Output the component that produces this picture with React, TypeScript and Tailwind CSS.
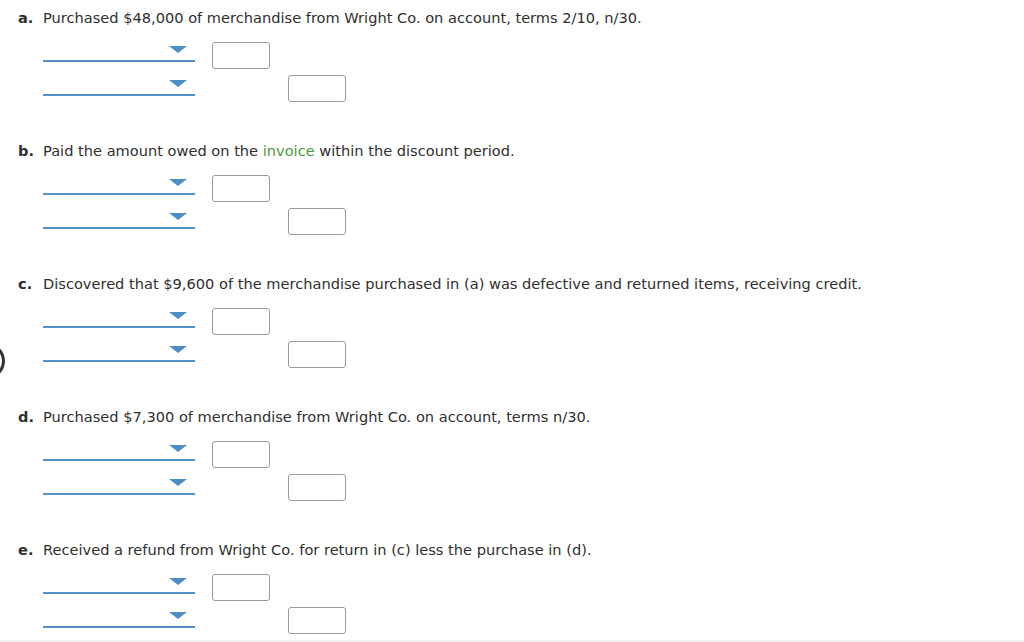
import React from 'react';

interface Entry {
  letter: string;
  text: React.ReactNode;
}

const entries: Entry[] = [
  { letter: 'a.', text: 'Purchased $48,000 of merchandise from Wright Co. on account, terms 2/10, n/30.' },
  {
    letter: 'b.',
    text: (
      <>
        Paid the amount owed on the <span className="text-[#4e9a3e]">invoice</span> within the discount period.
      </>
    ),
  },
  {
    letter: 'c.',
    text: 'Discovered that $9,600 of the merchandise purchased in (a) was defective and returned items, receiving credit.',
  },
  { letter: 'd.', text: 'Purchased $7,300 of merchandise from Wright Co. on account, terms n/30.' },
  { letter: 'e.', text: 'Received a refund from Wright Co. for return in (c) less the purchase in (d).' },
];

// account picker drawn as an underline with a caret on the right
function AccountSelect({ className = '' }: { className?: string }) {
  return (
    <div className={`w-[152px] h-5 border-b-2 border-[#5592c6] flex justify-end pr-[8px] pt-[4px] ${className}`}>
      <svg width="18" height="7" viewBox="0 0 18 7">
        <polygon points="0,0 18,0 9,7" fill="#4f8ec4" />
      </svg>
    </div>
  );
}

function AmountBox({ className = '' }: { className?: string }) {
  return (
    <input
      type="text"
      className={`w-[58px] h-[27px] rounded-[3px] border border-[#9a9a9a] bg-white outline-none ${className}`}
    />
  );
}

function JournalEntry({ entry }: { entry: Entry }) {
  return (
    <div className="h-[133px] pt-px">
      <div className="flex h-5 leading-5 text-[14.6px] text-[#2f2f2f]">
        <span className="w-[25px] font-bold">{entry.letter}</span>
        <span>{entry.text}</span>
      </div>
      {/* debit line */}
      <div className="flex items-start mt-[14px] pl-[25px]">
        <AccountSelect />
        <AmountBox className="ml-[17px]" />
      </div>
      {/* credit line */}
      <div className="flex items-start mt-[6px] pl-[25px]">
        <AccountSelect className="mt-px" />
        <AmountBox className="ml-[93px]" />
      </div>
    </div>
  );
}

export default function App() {
  return (
    <div className="relative w-[1024px] h-[642px] overflow-hidden bg-white font-['DejaVu_Sans',Verdana,sans-serif]">
      <div className="pl-[18px] pt-[7px]">
        {entries.map((e) => (
          <JournalEntry key={e.letter} entry={e} />
        ))}
      </div>
      <div className="h-[20px] bg-[#f1f1f1] mt-[-32px]" />
      {/* side handle peeking in from the left edge */}
      <div className="absolute left-[-31px] top-[343px] w-[36px] h-[36px] rounded-full border-[3px] border-[#333]" />
    </div>
  );
}
